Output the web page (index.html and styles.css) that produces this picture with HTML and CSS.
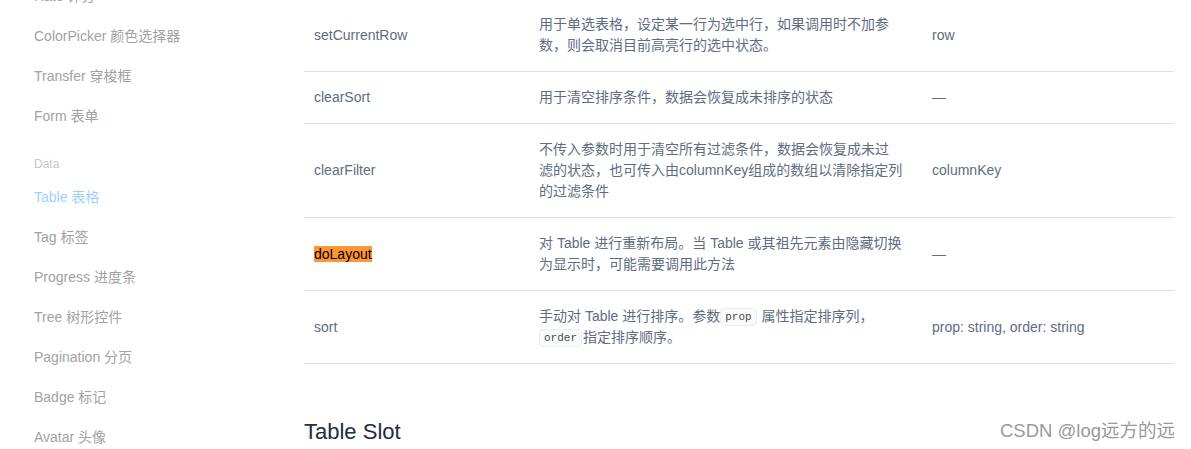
FILE: index.html
```html
<!DOCTYPE html>
<html lang="zh-CN">
<head>
<meta charset="utf-8">
<title>Table 表格</title>
<link rel="stylesheet" href="styles.css">
</head>
<body>
<div class="page">
  <aside class="sidebar">
    <ul class="nav-list">
      <li class="nav-item">Rate 评分</li>
      <li class="nav-item">ColorPicker 颜色选择器</li>
      <li class="nav-item">Transfer 穿梭框</li>
      <li class="nav-item">Form 表单</li>
      <li class="nav-group">Data</li>
      <li class="nav-item active">Table 表格</li>
      <li class="nav-item">Tag 标签</li>
      <li class="nav-item">Progress 进度条</li>
      <li class="nav-item">Tree 树形控件</li>
      <li class="nav-item">Pagination 分页</li>
      <li class="nav-item">Badge 标记</li>
      <li class="nav-item">Avatar 头像</li>
    </ul>
  </aside>
  <main class="content">
    <table class="api-table">
      <colgroup>
        <col class="col-name">
        <col class="col-desc">
        <col class="col-param">
      </colgroup>
      <tbody>
        <tr>
          <td>setCurrentRow</td>
          <td>用于单选表格，设定某一行为选中行，如果调用时不加参数，则会取消目前高亮行的选中状态。</td>
          <td>row</td>
        </tr>
        <tr>
          <td>clearSort</td>
          <td>用于清空排序条件，数据会恢复成未排序的状态</td>
          <td>—</td>
        </tr>
        <tr>
          <td>clearFilter</td>
          <td>不传入参数时用于清空所有过滤条件，数据会恢复成未过滤的状态，也可传入由columnKey组成的数组以清除指定列的过滤条件</td>
          <td>columnKey</td>
        </tr>
        <tr>
          <td><span class="find-hit">doLayout</span></td>
          <td>对 Table 进行重新布局。当 Table 或其祖先元素由隐藏切换为显示时，可能需要调用此方法</td>
          <td>—</td>
        </tr>
        <tr>
          <td>sort</td>
          <td>手动对 Table 进行排序。参数<code>prop</code> 属性指定排序列，<code>order</code>指定排序顺序。</td>
          <td>prop: string, order: string</td>
        </tr>
      </tbody>
    </table>
    <h3 class="section-title">Table Slot</h3>
  </main>
</div>
<div class="watermark">CSDN @log远方的远</div>
</body>
</html>
```

FILE: styles.css
```css
html, body {
  margin: 0;
  padding: 0;
  background: #fff;
  overflow: hidden;
}

body {
  width: 1191px;
  height: 449px;
  position: relative;
  font-family: "Liberation Sans", Arial, "Noto Sans CJK SC", sans-serif;
}

.page {
  display: flex;
  align-items: flex-start;
}

.sidebar {
  width: 304px;
  flex: none;
}

.nav-list {
  list-style: none;
  margin: -24px 0 0 0;
  padding: 0 0 0 34px;
}

.nav-item {
  font-size: 14px;
  line-height: 40px;
  height: 40px;
  color: #a2a2a2;
}

.nav-item.active {
  color: #a0cfff;
}

.nav-group {
  font-size: 12px;
  line-height: 26px;
  margin-top: 15px;
  color: #c8c8c8;
}

.content {
  width: 870px;
  flex: none;
}

.api-table {
  width: 870px;
  margin-top: -1px;
  border-collapse: collapse;
  table-layout: fixed;
  font-size: 14px;
  line-height: 21px;
  color: #5e6d82;
}

.col-name { width: 220px; }
.col-desc { width: 393px; }
.col-param { width: 257px; }

.api-table td {
  padding: 15px;
  border-bottom: 1px solid #dcdfe6;
  vertical-align: middle;
}

.api-table td:first-child {
  padding-left: 10px;
}

.api-table td:nth-child(2) {
  padding-right: 14.5px;
}

.find-hit {
  background: #ff9632;
  color: #000;
}

code {
  font-family: "Liberation Mono", "DejaVu Sans Mono", monospace;
  font-size: 11px;
  color: #4a4a4a;
  background: #f9fafc;
  border: 1px solid #eaeefb;
  border-radius: 4px;
  padding: 0 4px;
  line-height: 16px;
  display: inline-block;
  vertical-align: 1px;
  margin-right: 1px;
}

.section-title {
  margin: 51px 0 0 0;
  font-size: 22px;
  font-weight: 400;
  line-height: 33px;
  color: #1f2f3d;
}

.watermark {
  position: absolute;
  right: 16px;
  top: 417px;
  font-size: 18.5px;
  line-height: 28px;
  color: #9a9a9a;
  text-shadow: 0 0 1px #fff;
  font-family: "Liberation Sans", Arial, "Noto Sans CJK SC", sans-serif;
}
```
